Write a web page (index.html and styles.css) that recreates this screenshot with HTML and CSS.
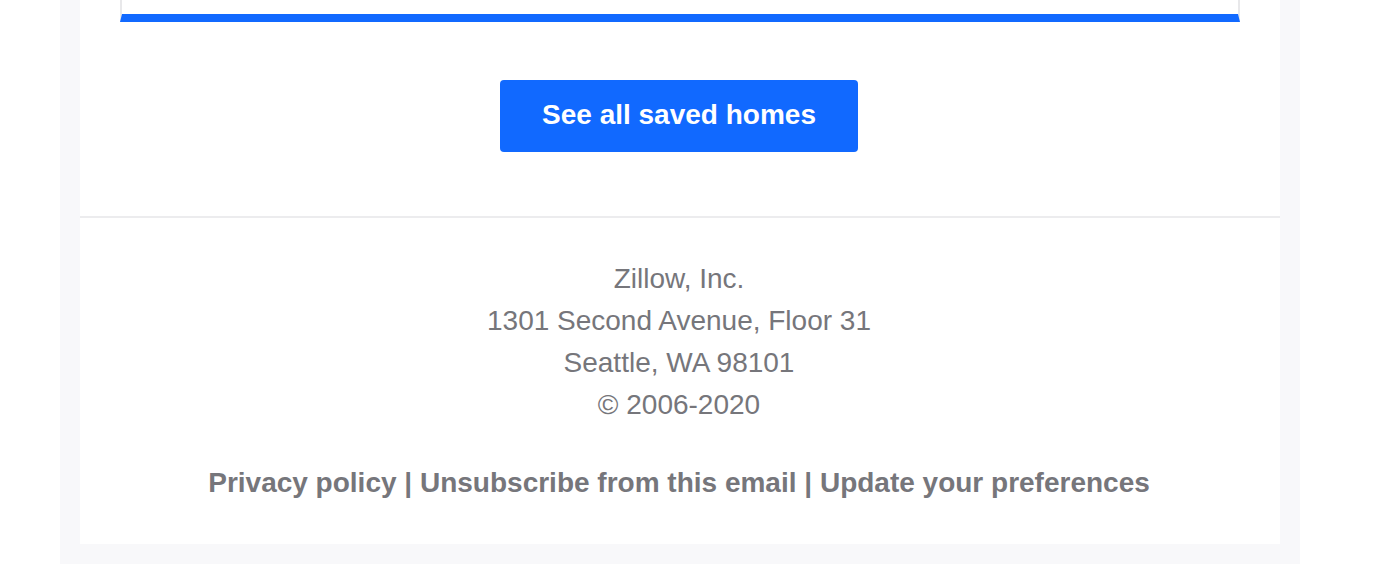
FILE: index.html
```html
<!DOCTYPE html>
<html lang="en">
<head>
<meta charset="utf-8">
<title>Zillow saved homes</title>
<link rel="stylesheet" href="styles.css">
</head>
<body>
<div class="outer">
  <div class="inner">
    <div class="card"></div>
    <div class="cta">
      <a class="btn" href="#">See all saved homes</a>
    </div>
    <div class="footer">
      <div class="address">
        <div>Zillow, Inc.</div>
        <div>1301 Second Avenue, Floor 31</div>
        <div>Seattle, WA 98101</div>
        <div>&copy; 2006-2020</div>
      </div>
      <div class="links">
        <a href="#">Privacy policy</a> | <a href="#">Unsubscribe from this email</a> | <a href="#">Update your preferences</a>
      </div>
    </div>
  </div>
</div>
</body>
</html>
```

FILE: styles.css
```css
html, body {
  margin: 0;
  padding: 0;
  background: #ffffff;
  font-family: "Liberation Sans", Arial, Helvetica, sans-serif;
}

.outer {
  width: 1200px;
  margin-left: 60px;
  padding: 0 20px 20px;
  background: #f8f8fa;
}

.inner {
  background: #ffffff;
}

.card {
  margin: 0 40px;
  height: 14px;
  border-left: 2px solid #e8e8ea;
  border-right: 2px solid #e8e8ea;
  border-bottom: 8px solid #1169ff;
}

.cta {
  display: flex;
  justify-content: center;
  padding: 58px 2px 64px 0;
  border-bottom: 2px solid #ececee;
}

.btn {
  display: block;
  background: #1169ff;
  color: #ffffff;
  font-weight: 700;
  font-size: 28px;
  line-height: 36px;
  padding: 17px 42px 19px;
  border-radius: 4px;
  text-decoration: none;
}

.footer {
  padding: 40px 2px 40px 0;
  text-align: center;
  color: #76767b;
  font-size: 28px;
  line-height: 42px;
}

.links {
  margin-top: 36px;
  font-weight: 700;
}

.links a {
  color: #76767b;
  text-decoration: none;
}
```
